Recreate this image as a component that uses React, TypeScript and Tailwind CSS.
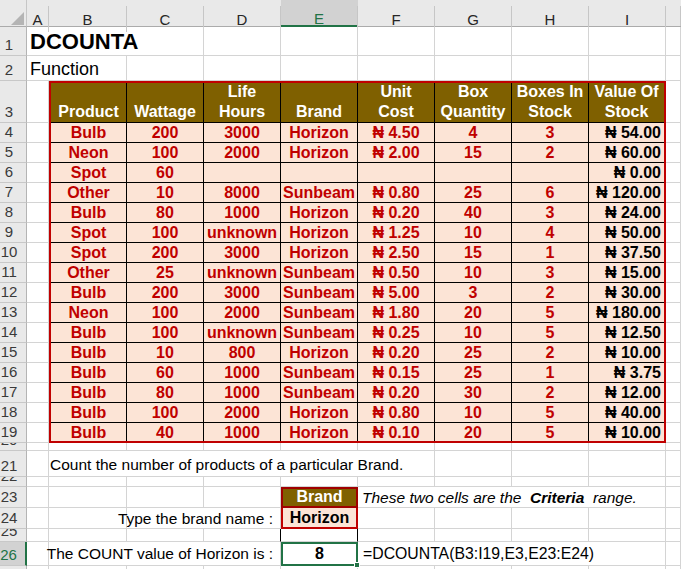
import React from 'react';

const GRID = 'border-r border-b border-[#d4d4d4]';

const headers: string[][] = [
  ['Product'],
  ['Wattage'],
  ['Life', 'Hours'],
  ['Brand'],
  ['Unit', 'Cost'],
  ['Box', 'Quantity'],
  ['Boxes In', 'Stock'],
  ['Value Of', 'Stock'],
];

const data: string[][] = [
  ['Bulb', '200', '3000', 'Horizon', '₦ 4.50', '4', '3', '₦ 54.00'],
  ['Neon', '100', '2000', 'Horizon', '₦ 2.00', '15', '2', '₦ 60.00'],
  ['Spot', '60', '', '', '', '', '', '₦ 0.00'],
  ['Other', '10', '8000', 'Sunbeam', '₦ 0.80', '25', '6', '₦ 120.00'],
  ['Bulb', '80', '1000', 'Horizon', '₦ 0.20', '40', '3', '₦ 24.00'],
  ['Spot', '100', 'unknown', 'Horizon', '₦ 1.25', '10', '4', '₦ 50.00'],
  ['Spot', '200', '3000', 'Horizon', '₦ 2.50', '15', '1', '₦ 37.50'],
  ['Other', '25', 'unknown', 'Sunbeam', '₦ 0.50', '10', '3', '₦ 15.00'],
  ['Bulb', '200', '3000', 'Sunbeam', '₦ 5.00', '3', '2', '₦ 30.00'],
  ['Neon', '100', '2000', 'Sunbeam', '₦ 1.80', '20', '5', '₦ 180.00'],
  ['Bulb', '100', 'unknown', 'Sunbeam', '₦ 0.25', '10', '5', '₦ 12.50'],
  ['Bulb', '10', '800', 'Horizon', '₦ 0.20', '25', '2', '₦ 10.00'],
  ['Bulb', '60', '1000', 'Sunbeam', '₦ 0.15', '25', '1', '₦ 3.75'],
  ['Bulb', '80', '1000', 'Sunbeam', '₦ 0.20', '30', '2', '₦ 12.00'],
  ['Bulb', '100', '2000', 'Horizon', '₦ 0.80', '10', '5', '₦ 40.00'],
  ['Bulb', '40', '1000', 'Horizon', '₦ 0.10', '20', '5', '₦ 10.00'],
];

function RowHead({ n, sel }: { n: number; sel?: boolean }) {
  return sel ? (
    <div className="flex items-end justify-center pr-[8px] pb-[1px] bg-[#d2d2d2] border-r-2 border-r-[#217346] border-b border-b-[#c8c8c8] text-[15px] leading-[18px] text-[#217346] overflow-hidden whitespace-nowrap">
      {n}
    </div>
  ) : (
    <div className="flex items-end justify-center pr-[8px] pb-[1px] bg-[#e9e9e9] border-r border-b border-r-[#b4b4b4] border-b-[#c8c8c8] text-[15px] leading-[18px] text-[#3a3a3a] overflow-hidden whitespace-nowrap">
      {n}
    </div>
  );
}

function Blank({ n }: { n: number }) {
  return (
    <>
      {Array.from({ length: n }).map((_, i) => (
        <div key={i} className={GRID} />
      ))}
    </>
  );
}

function ColHead({ label, sel }: { label: string; sel?: boolean }) {
  return sel ? (
    <div className="flex flex-col bg-[#d2d2d2] border-b-2 border-b-[#217346]">
      <div className="mt-[6px] flex-1 border-r border-r-[#c6c6c6] flex items-center justify-center pt-[2px] text-[15px] text-[#217346]">
        {label}
      </div>
    </div>
  ) : (
    <div className="flex flex-col bg-[#e9e9e9] border-b border-b-[#ababab]">
      <div className="mt-[6px] flex-1 border-r border-r-[#c6c6c6] flex items-center justify-center pt-[3px] text-[15px] text-[#262626]">
        {label}
      </div>
    </div>
  );
}

function Table() {
  return (
    <div className="col-span-8 row-span-17 border-2 border-[#c00000] grid grid-cols-[76px_77px_77px_77px_77px_77px_77px_75px] grid-rows-[40px_repeat(15,20px)_18px] bg-[#fce4d6]">
      {headers.map((h, i) => (
        <div
          key={'h' + i}
          className={
            'bg-[#7f6000] text-white font-bold text-[16px] leading-[20px] flex flex-col justify-end items-center text-center whitespace-nowrap border-b border-black ' +
            (i < 7 ? 'border-r' : '')
          }
        >
          {h.map((line, j) => (
            <span key={j}>{line}</span>
          ))}
        </div>
      ))}
      {data.map((row, r) =>
        row.map((v, c) => {
          const last = c === 7;
          const lastRow = r === data.length - 1;
          return (
            <div
              key={r + '-' + c}
              className={
                'flex items-center text-[16px] leading-[19px] font-bold whitespace-nowrap border-black ' +
                (last ? 'justify-end pr-[3px] text-black ' : 'justify-center border-r text-[#c00000] ') +
                (lastRow ? '' : 'border-b')
              }
            >
              {v}
            </div>
          );
        })
      )}
    </div>
  );
}

export default function App() {
  const cols = ['A', 'B', 'C', 'D', 'E', 'F', 'G', 'H', 'I'];
  const dataRows = Array.from({ length: 16 }, (_, i) => i + 4);
  return (
    <div className="w-[681px] h-[569px] overflow-hidden bg-white text-black font-['Liberation_Sans',Arial,'DejaVu_Sans',sans-serif]">
      <div className="grid grid-cols-[27px_22px_78px_77px_77px_77px_77px_77px_77px_77px_1fr] grid-rows-[27px_29px_25px_42px_repeat(16,20px)_8px_26px_10px_21px_21px_13px_24px_20px]">
        {/* column headers */}
        <div className="relative bg-[#e9e9e9] border-r border-b border-r-[#c6c6c6] border-b-[#ababab]">
          <svg className="absolute left-0 top-0" width="26" height="26" viewBox="0 0 26 26">
            <polygon points="24,12 24,25 11,25" fill="#b4b4b4" />
          </svg>
        </div>
        {cols.map((c) => (
          <ColHead key={c} label={c} sel={c === 'E'} />
        ))}
        <ColHead label="" />

        {/* row 1 */}
        <RowHead n={1} />
        <div className="col-span-3 border-b border-r border-[#d4d4d4] flex items-end pl-[3px] text-[22px] leading-[26px] font-bold whitespace-nowrap">
          DCOUNTA
        </div>
        <Blank n={7} />

        {/* row 2 */}
        <RowHead n={2} />
        <div className="col-span-2 border-b border-r border-[#d4d4d4] flex items-end pl-[3px] text-[18px] leading-[22px] whitespace-nowrap">
          Function
        </div>
        <Blank n={8} />

        {/* row 3 with table */}
        <RowHead n={3} />
        <div className={GRID} />
        <Table />
        <div className={GRID} />

        {dataRows.map((n) => (
          <React.Fragment key={n}>
            <RowHead n={n} />
            <div className={GRID} />
            <div className={GRID} />
          </React.Fragment>
        ))}

        {/* row 20 */}
        <RowHead n={20} />
        <Blank n={10} />

        {/* row 21 */}
        <RowHead n={21} />
        <div className={GRID} />
        <div className="col-span-5 border-b border-r border-[#d4d4d4] flex items-end pl-[1px] pb-[1px] text-[15.5px] leading-[20px] whitespace-nowrap">
          Count the number of products of a particular Brand.
        </div>
        <Blank n={4} />

        {/* row 22 */}
        <RowHead n={22} />
        <Blank n={10} />

        {/* row 23 */}
        <RowHead n={23} />
        <Blank n={4} />
        <div className="bg-[#7f6000] text-white font-bold border-2 border-[#a00000] flex items-end justify-center text-[16px] leading-[19px]">
          Brand
        </div>
        <div className="col-span-4 border-b border-r border-[#d4d4d4] flex items-end pl-[4px] text-[15.5px] leading-[19px] italic whitespace-nowrap">
          These two cells are the&nbsp;&nbsp;<span className="font-bold">Criteria</span>&nbsp;&nbsp;range.
        </div>
        <div className={GRID} />

        {/* row 24 */}
        <RowHead n={24} />
        <Blank n={2} />
        <div className="col-span-2 border-b border-r border-[#d4d4d4] flex items-end justify-end pr-[7px] text-[15.5px] leading-[19px] whitespace-nowrap">
          Type the brand name :
        </div>
        <div className="bg-[#fce4d6] font-bold text-black border-2 border-t-0 border-[#c00000] flex items-end justify-center text-[16px] leading-[19px]">
          Horizon
        </div>
        <Blank n={5} />

        {/* row 25 */}
        <RowHead n={25} />
        <Blank n={3} />
        <div className="border-b border-[#d4d4d4] border-r border-r-black" />
        <div className="border-b border-[#d4d4d4] border-r border-r-black" />
        <Blank n={5} />

        {/* row 26 */}
        <RowHead n={26} sel />
        <div className={GRID} />
        <div className="col-span-3 border-b border-r border-[#d4d4d4] flex items-end justify-end pr-[7px] pb-[1px] text-[15.5px] leading-[20px] whitespace-nowrap">
          The COUNT value of Horizon is :
        </div>
        <div className="relative border-2 border-[#217346] flex items-end justify-center font-bold text-[16px] leading-[20px]">
          8
          <div className="absolute right-[-4px] bottom-[-4px] w-[6px] h-[6px] bg-[#217346] border border-white" />
        </div>
        <div className="col-span-4 border-b border-r border-[#d4d4d4] flex items-end pl-[5px] pb-[1px] text-[15.8px] leading-[20px] whitespace-nowrap">
          =DCOUNTA(B3:I19,E3,E23:E24)
        </div>
        <div className={GRID} />

        {/* row 27 */}
        <RowHead n={27} />
        <Blank n={10} />
      </div>
    </div>
  );
}
